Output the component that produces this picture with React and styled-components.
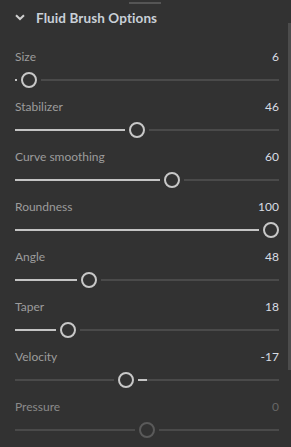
import React from "react";
import styled, { createGlobalStyle } from "styled-components";

const GlobalStyle = createGlobalStyle`
  html, body {
    margin: 0;
    padding: 0;
    background: #323232;
  }
  body {
    font-family: Lato, "Liberation Sans", sans-serif;
  }
`;

const Panel = styled.div`
  position: relative;
  width: 291px;
  height: 447px;
  overflow: hidden;
  background: #323232;
  display: flex;
  flex-direction: column;
`;

const Handle = styled.div`
  align-self: center;
  width: 32px;
  height: 2px;
  margin-top: 2px;
  margin-left: -2px;
  background: #555555;
`;

const Header = styled.div`
  height: 41px;
  display: flex;
  align-items: center;
  gap: 11px;
  padding: 0 0 14px 15px;
  box-sizing: border-box;
`;

const Title = styled.div`
  font-size: 13.5px;
  font-weight: 700;
  color: #c9d0d8;
  letter-spacing: 0.1px;
`;

const Scrollbar = styled.div`
  position: absolute;
  right: 0;
  top: 23px;
  width: 3px;
  height: 347px;
  background: #4c4c4c;
`;

const Row = styled.div`
  height: 50px;
  display: flex;
  flex-direction: column;
  padding: 0 12px 0 15px;
`;

const LabelLine = styled.div`
  height: 24px;
  box-sizing: border-box;
  padding-bottom: 2px;
  display: flex;
  align-items: center;
  justify-content: space-between;
  font-size: 12px;
`;

const Label = styled.span`
  color: ${p => (p.$disabled ? "#8a8a8a" : "#9c9c9c")};
`;

const Value = styled.span`
  color: ${p => (p.$disabled ? "#666666" : "#d8dde4")};
`;

const Track = styled.div`
  height: 22px;
  display: flex;
  align-items: center;
`;

const Segment = styled.div`
  height: 2px;
  flex: ${p => (p.$grow ? "1 1 auto" : "0 0 auto")};
  background: ${p => (p.$on ? "#c4c4c4" : "#4a4a4a")};
`;

const Thumb = styled.div`
  flex: 0 0 auto;
  width: 16px;
  height: 16px;
  box-sizing: border-box;
  border-radius: 50%;
  border: 2px solid ${p => (p.$disabled ? "#5a5a5a" : "#c8c8c8")};
  margin: 0 4px;
`;

const Chevron = () => (
  <svg width="10" height="7" viewBox="0 0 10 7">
    <path d="M1 1.2 L5 5 L9 1.2" fill="none" stroke="#cfcfcf" strokeWidth="2" />
  </svg>
);

const TRACK = 264;
const TRAVEL = TRACK - 16;

const Slider = ({ value, min, max, bipolar, disabled }) => {
  const f = (value - min) / (max - min);
  const left = Math.round(f * TRAVEL);
  const leftSeg = Math.max(0, left - 4);
  const zero = bipolar ? Math.round(((0 - min) / (max - min)) * TRAVEL) + 8 : 0;
  const thumbRight = left + 16 + 4;
  const fillRight = bipolar && value < 0 ? Math.max(0, zero - thumbRight) : 0;

  return (
    <Track>
      {leftSeg > 0 && (
        <Segment $on={!bipolar && !disabled} style={{ width: leftSeg }} />
      )}
      <Thumb $disabled={disabled} style={left < 4 ? { marginLeft: left } : null} />
      {fillRight > 0 && <Segment $on style={{ width: fillRight }} />}
      {left < TRAVEL && <Segment $grow />}
    </Track>
  );
};

const options = [
  { label: "Size", value: 6, min: 0, max: 250 },
  { label: "Stabilizer", value: 46, min: 0, max: 100 },
  { label: "Curve smoothing", value: 60, min: 0, max: 100 },
  { label: "Roundness", value: 100, min: 0, max: 100 },
  { label: "Angle", value: 48, min: 0, max: 180 },
  { label: "Taper", value: 18, min: 0, max: 100 },
  { label: "Velocity", value: -17, min: -100, max: 100, bipolar: true },
  { label: "Pressure", value: 0, min: -100, max: 100, bipolar: true, disabled: true },
];

const App = () => (
  <Panel>
    <GlobalStyle />
    <Handle />
    <Header>
      <Chevron />
      <Title>Fluid Brush Options</Title>
    </Header>
    {options.map(o => (
      <Row key={o.label}>
        <LabelLine>
          <Label $disabled={o.disabled}>{o.label}</Label>
          <Value $disabled={o.disabled}>{o.value}</Value>
        </LabelLine>
        <Slider {...o} />
      </Row>
    ))}
    <Scrollbar />
  </Panel>
);

export default App;
